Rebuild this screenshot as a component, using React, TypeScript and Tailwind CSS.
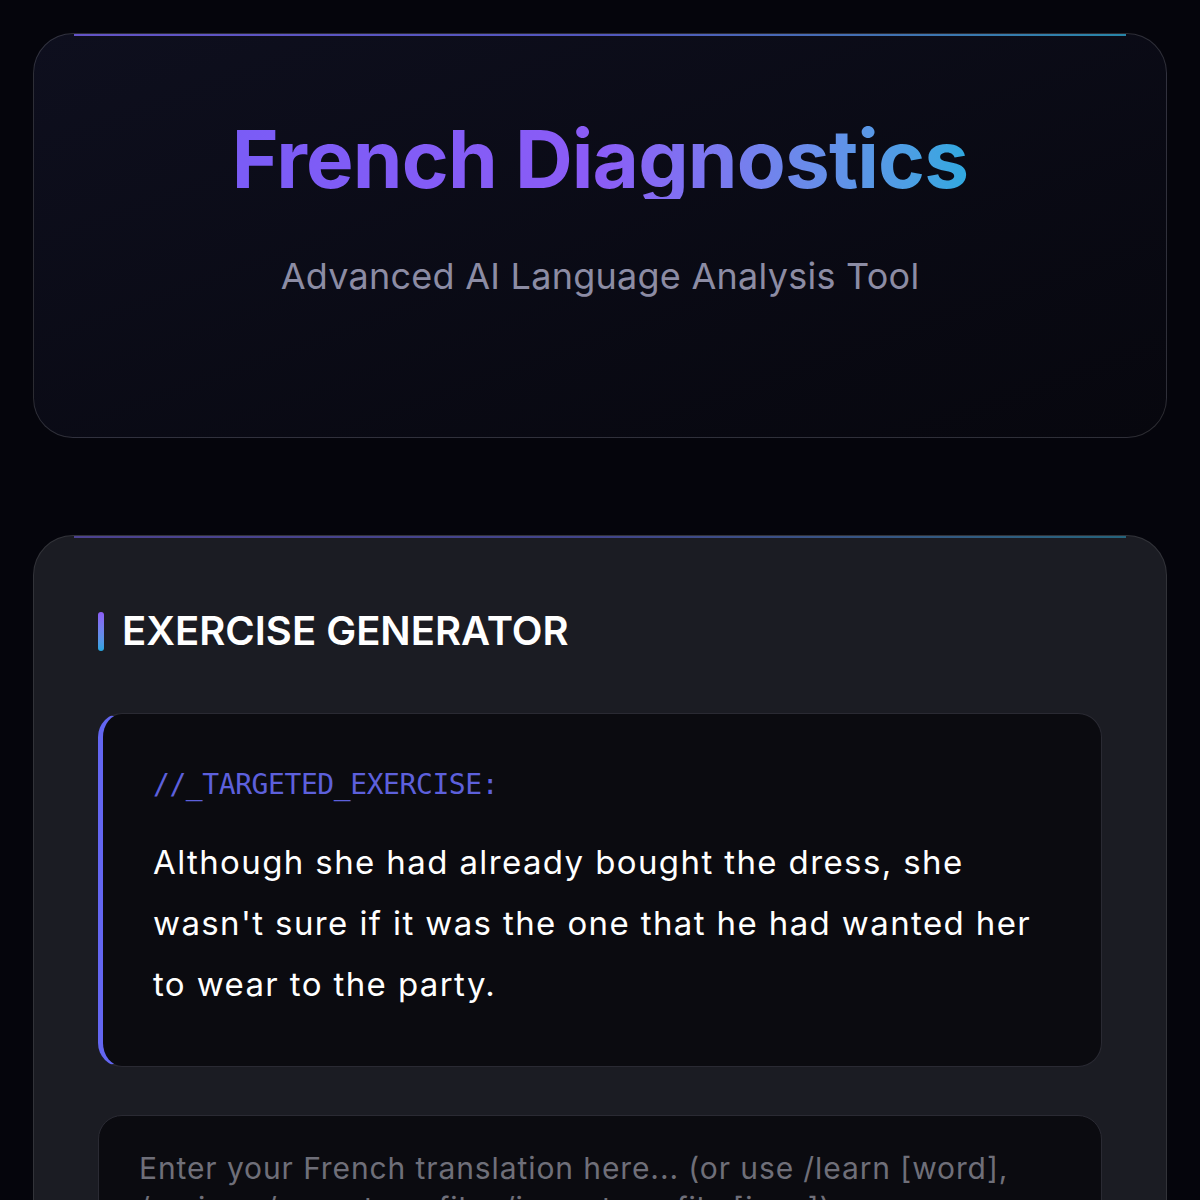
const exercise =
  "Although she had already bought the dress, she wasn't sure if it was the one that he had wanted her to wear to the party.";

const GlowLine = ({ className }: { className: string }) => (
  <div
    className={`pointer-events-none absolute top-0 left-[40px] right-[40px] h-[2px] bg-linear-to-r from-[#6d5bd9] via-[#5a5fd0] to-[#2a93b8] ${className}`}
  />
);

const Header = () => (
  <div className="relative h-[405px] rounded-[40px] border border-white/15 bg-linear-to-br from-[#0e0f1e] to-[#07070e] pt-[85px] text-center">
    <GlowLine className="opacity-90" />
    <h1 className="inline-block bg-linear-to-r from-[#7a5cf6] via-[#8b5cf6] to-[#2fa9e0] bg-clip-text text-[80px] leading-none font-bold tracking-[-0.011em] text-transparent">
      French Diagnostics
    </h1>
    <p className="mt-[50px] text-[36px] leading-[1.5] tracking-[0.007em] text-[#8c8ca4]">
      Advanced AI Language Analysis Tool
    </p>
  </div>
);

const ExerciseGenerator = () => (
  <div className="relative mt-[97px] rounded-[40px] border border-white/10 bg-[#1b1c23] px-[64px] pt-[75px] pb-16">
    <GlowLine className="opacity-60" />
    <div className="flex items-center gap-[18px]">
      <span className="h-[39px] w-1.5 rounded-full bg-linear-to-b from-[#8b5cf6] to-[#22a6e0]" />
      <h2 className="text-[40px] leading-none font-semibold text-white">EXERCISE GENERATOR</h2>
    </div>

    <div className="mt-[62px] rounded-3xl border border-[#2a2a33] border-l-[5px] border-l-[#6366f1] bg-[#0b0b10] px-[50px] pt-[50px] pb-[51px]">
      <div className="font-['DejaVu_Sans_Mono','Liberation_Mono',monospace] text-[28px] leading-[42px] tracking-[-0.015em] text-[#5d60dc]">
        //_TARGETED_EXERCISE:
      </div>
      <p className="mt-[26px] text-[33px] leading-[61px] tracking-[0.042em] text-white">{exercise}</p>
    </div>

    <textarea
      rows={5}
      className="mt-[48px] block w-full resize-none rounded-3xl border border-[#2a2a33] bg-[#0b0b10] px-[40px] py-8 text-[30px] leading-[40px] tracking-[0.03em] text-white outline-none placeholder:text-[#6f6f79]"
      placeholder="Enter your French translation here... (or use /learn [word], /review, /export-profile, /import-profile [json])"
    />
  </div>
);

export default function App() {
  return (
    <div className="min-h-screen bg-[#05050c] px-[33px] pt-[33px] pb-20 font-['Inter','Noto_Sans',sans-serif]">
      <Header />
      <ExerciseGenerator />
    </div>
  );
}
